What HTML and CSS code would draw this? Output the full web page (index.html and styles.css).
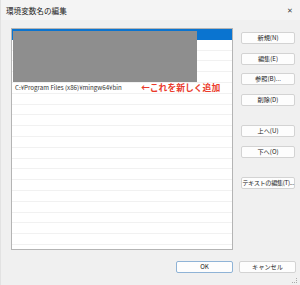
FILE: index.html
```html
<!DOCTYPE html>
<html lang="ja">
<head>
    <meta charset="UTF-8">
    <title>環境変数名の編集</title>
    <link rel="stylesheet" href="styles.css">
</head>
<body>

    <div class="window">
        <!-- タイトルバー -->
        <div class="titlebar">
            <span class="title">環境変数名の編集</span>
            <span class="close">✕</span>
        </div>

        <div class="main">
            <!-- パス一覧 -->
            <div class="list">
                <div class="row selected"></div>
                <div class="row"></div>
                <div class="row"></div>
                <div class="row"></div>
                <div class="row"></div>
                <div class="row">
                    <span class="path">C:¥Program Files (x86)¥mingw64¥bin</span>
                    <span class="note">←これを新しく追加</span>
                </div>
                <div class="row"></div>
                <div class="row"></div>
                <div class="row"></div>
                <div class="row"></div>
                <div class="row"></div>
                <div class="row"></div>
                <div class="row"></div>
                <div class="row"></div>
                <div class="row"></div>
                <div class="row"></div>
                <div class="row"></div>
                <div class="row"></div>
                <div class="row"></div>
                <div class="row"></div>
                <div class="mask"></div>
            </div>

            <!-- 右側のボタン -->
            <div class="side">
                <button class="btn">新規(N)</button>
                <button class="btn">編集(E)</button>
                <button class="btn">参照(B)...</button>
                <button class="btn">削除(D)</button>
                <button class="btn group">上へ(U)</button>
                <button class="btn">下へ(O)</button>
                <button class="btn group tight">テキストの編集(T)...</button>
            </div>
        </div>

        <div class="footer">
            <button class="btn wide default">OK</button>
            <button class="btn wide">キャンセル</button>
        </div>
        <span class="grip"></span>
    </div>

</body>
</html>
```

FILE: styles.css
```css
body {
    margin: 0;
    font-family: "Noto Sans CJK JP", "Noto Sans", sans-serif;
    color: #1b1b1b;
}
.window {
    position: relative;
    width: 300px;
    height: 285px;
    background-color: #f0f0f0;
    display: flex;
    flex-direction: column;
    box-sizing: border-box;
    border-left: 1px solid #e2e2e2;
}
.titlebar {
    height: 20px;
    background-color: #f4f4f4;
    display: flex;
    align-items: center;
    justify-content: space-between;
    padding: 0 7px 0 5px;
}
.title {
    font-size: 7.6px;
    color: #222;
}
.close {
    font-size: 7px;
    color: #444;
}
.main {
    display: flex;
    padding: 8px 0 0 10px;
}
.list {
    position: relative;
    width: 222px;
    height: 222px;
    box-sizing: border-box;
    border: 1px solid #b4b4b4;
    background-color: #fff;
    overflow: hidden;
}
.row {
    height: 10.8px;
    box-sizing: border-box;
    border-bottom: 1px solid #f1f1f1;
    display: flex;
    align-items: center;
    padding-left: 3px;
}
.row.selected {
    background-color: #0a74d0;
    border-bottom-color: #0a74d0;
}
.path {
    font-size: 6.2px;
    color: #333;
    width: 126px;
    white-space: nowrap;
}
.note {
    font-size: 8.8px;
    font-weight: bold;
    color: #ea3a2b;
}
.mask {
    position: absolute;
    left: 1px;
    top: 2px;
    width: 184px;
    height: 51px;
    background-color: #8e8e8e;
}
.side {
    display: flex;
    flex-direction: column;
    margin-left: 8px;
    padding-top: 4px;
    gap: 8.5px;
}
.btn {
    width: 54px;
    height: 12px;
    padding: 0;
    border: 1px solid #d3d3d3;
    border-radius: 2px;
    background-color: #fdfdfd;
    font-family: "Noto Sans CJK JP", "Noto Sans", sans-serif;
    font-size: 6.2px;
    line-height: 10px;
    color: #222;
    white-space: nowrap;
    overflow: visible;
}
.btn.group {
    margin-top: 11px;
}
.btn.tight {
    letter-spacing: -0.35px;
}
.footer {
    display: flex;
    justify-content: flex-end;
    gap: 6px;
    padding: 11px 4px 0 0;
}
.btn.wide {
    width: 57px;
}
.btn.default {
    border-color: #8fb3d6;
}
.grip {
    position: absolute;
    right: 3px;
    bottom: 2px;
    width: 4px;
    height: 4px;
    border-right: 1px dotted #aaa;
    border-bottom: 1px dotted #aaa;
}
```
